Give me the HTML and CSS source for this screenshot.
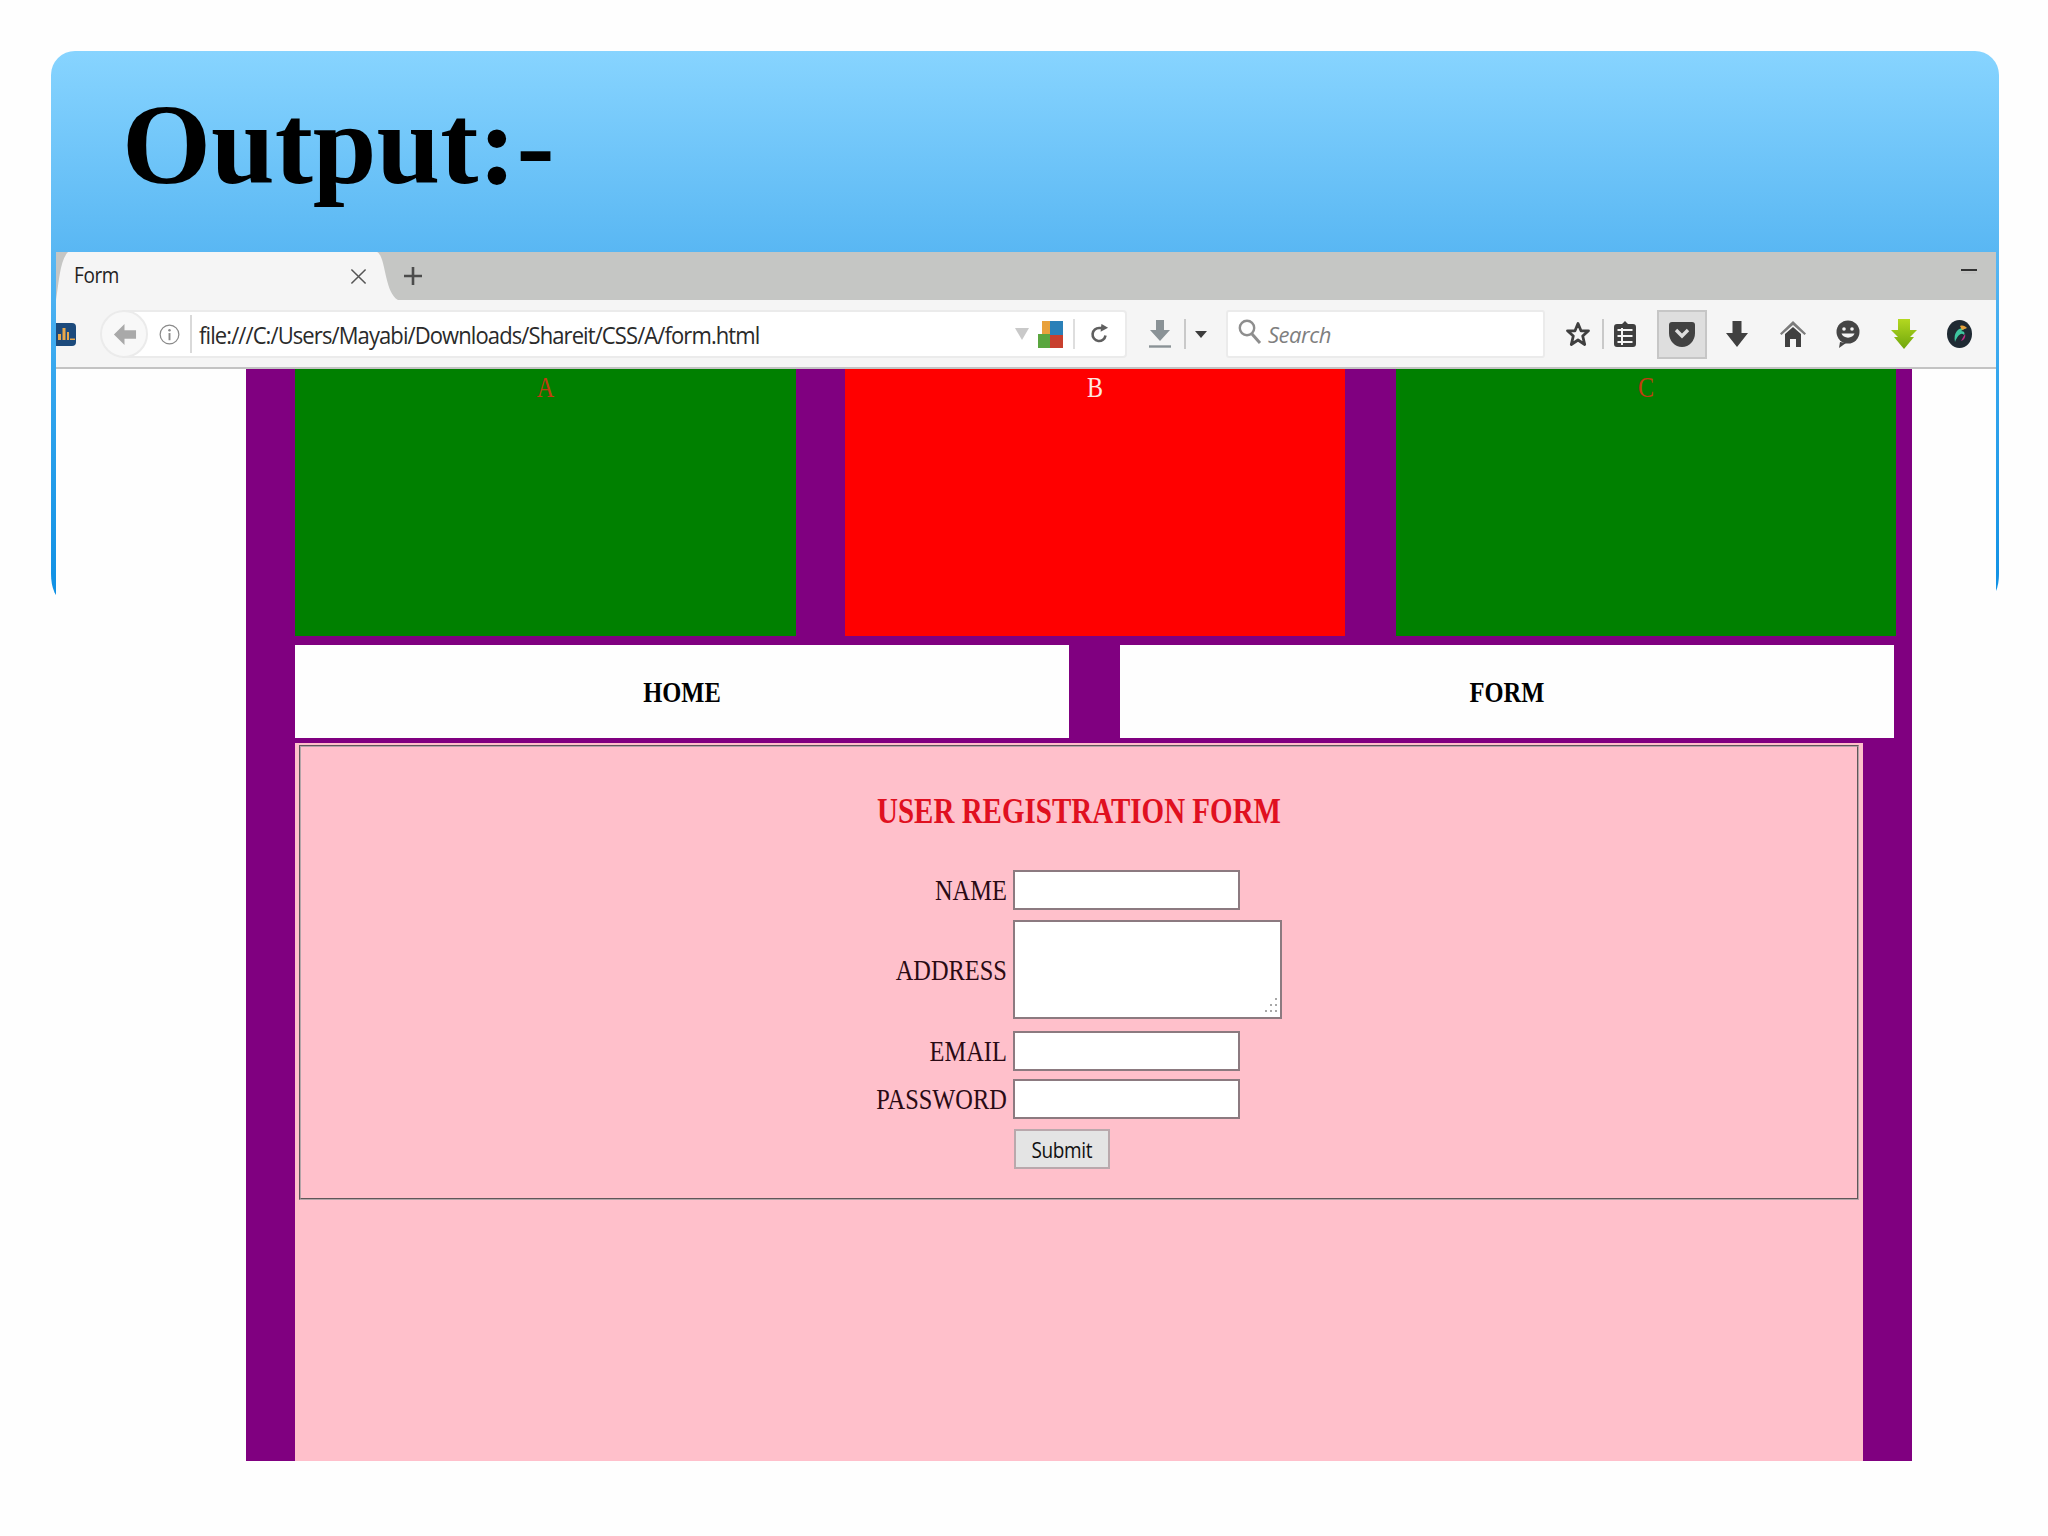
FILE: index.html
```html
<!DOCTYPE html>
<html lang="en">
<head>
<meta charset="utf-8">
<title>Output</title>
<link rel="stylesheet" href="styles.css">
</head>
<body>
<div class="slide-bg"></div>
<main class="slide">
  <h1 class="title">Output:-</h1>
  <section class="browser">
    <div class="tabstrip">
      <div class="tab">
        <span class="tab-label">Form</span>
        <svg class="tab-close" viewBox="0 0 18 18"><path d="M1.5 1.5 16.5 16.5M16.5 1.5 1.5 16.5" stroke="#555" stroke-width="1.6" fill="none"/></svg>
      </div>
      <svg class="tab-new" viewBox="0 0 20 20"><path d="M10 1V19M1 10H19" stroke="#4c4c4c" stroke-width="2.6" fill="none"/></svg>
      <svg class="win-min" viewBox="0 0 16 6"><path d="M0 2H16" stroke="#333" stroke-width="2"/><path d="M1 5H15" stroke="#bbb" stroke-width="1"/></svg>
    </div>
    <div class="toolbar">
      <svg class="ext-chart" viewBox="0 0 20 23"><rect x="-6" width="26" height="23" rx="4" fill="#1c4a7c"/><path d="M2 17H5V11H2ZM6.5 17H9.5V5H6.5ZM11 17H13V9H11ZM14 17H19V15.500H14Z" fill="#e8a84a"/></svg>
      <div class="back">
        <svg viewBox="0 0 26 26"><path d="M13 2 2 13 13 24V17.500H25V8.500H13Z" fill="#a9a9a9"/></svg>
      </div>
      <div class="urlbar">
        <svg class="info" viewBox="0 0 22 22"><circle cx="11" cy="11" r="9.800" fill="none" stroke="#8a8a8a" stroke-width="1.300"/><circle cx="11" cy="6.500" r="1.300" fill="#8a8a8a"/><path d="M11 9.500V17" stroke="#8a8a8a" stroke-width="2"/></svg>
        <span class="url-sep"></span>
        <span class="url-text">file:///C:/Users/Mayabi/Downloads/Shareit/CSS/A/form.html</span>
        <svg class="url-drop" viewBox="0 0 14 12"><path d="M0 0H14L7 12Z" fill="#c9c9c9"/></svg>
        <svg class="avg" viewBox="0 0 25 27"><rect x="4" y="0" width="8" height="13" fill="#e8a13c"/><rect x="0" y="13" width="12" height="14" fill="#5aa63f"/><rect x="12" y="0" width="13" height="14" fill="#2a80b8"/><rect x="12" y="14" width="13" height="13" fill="#c8402e"/></svg>
        <span class="url-sep2"></span>
        <svg class="reload" viewBox="0 0 20 20"><path d="M15.500 11.500A6.500 6.500 0 1 1 9.500 4H13" fill="none" stroke="#5f5f5f" stroke-width="2.600"/><path d="M11 0V8L18 3Z" fill="#5f5f5f" transform="rotate(6 12 4)"/></svg>
      </div>
      <svg class="dl" viewBox="0 0 22 28"><path d="M7 0H15V10H21L11 21 1 10H7Z" fill="#8a9296"/><path d="M0 26.500H22" stroke="#8a9296" stroke-width="2.400"/></svg>
      <span class="tool-sep"></span>
      <svg class="caret" viewBox="0 0 12 7"><path d="M0 0H12L6 7Z" fill="#3c3c3c"/></svg>
      <div class="search">
        <svg class="mag" viewBox="0 0 24 26"><circle cx="9" cy="9" r="7.200" fill="none" stroke="#8e8e8e" stroke-width="2.400"/><path d="M14 15 22 24" stroke="#8e8e8e" stroke-width="3"/></svg>
        <span class="search-text">Search</span>
      </div>
      <svg class="star" viewBox="0 0 26 26"><path d="M13 2.500 16 9.800H23.500L17.700 15 19.700 23.500 13 19 6.300 23.500 8.300 15 2.500 9.800H10Z" fill="none" stroke="#3f3f3f" stroke-width="2.800" stroke-linejoin="round"/></svg>
      <span class="tool-sep sep-star"></span>
      <svg class="clip" viewBox="0 0 22 26"><path d="M8 3 11 0 14 3H19Q22 3 22 6V23Q22 26 19 26H3Q0 26 0 23V6Q0 3 3 3Z" fill="#3f3f3f"/><path d="M3.500 9H18.500M3.500 15H18.500M3.500 21H18.500M8 7V24" stroke="#f5f5f5" stroke-width="2" fill="none"/></svg>
      <div class="pocket">
        <svg viewBox="0 0 26 25"><path d="M3 0H23Q26 0 26 3V11C26 19 20 25 13 25S0 19 0 11V3Q0 0 3 0Z" fill="#424242"/><path d="M7 8 13 14 19 8" fill="none" stroke="#dedede" stroke-width="3.400"/></svg>
      </div>
      <svg class="down" viewBox="0 0 22 26"><path d="M6.500 0H15.500V12H22L11 26 0 12H6.500Z" fill="#404040"/></svg>
      <svg class="home" viewBox="0 0 26 26"><path d="M13 0 26 12.500 24.500 14 13 4 1.500 14 0 12.500Z" fill="#7b7b7b"/><path d="M13 6 21 13V26H16V18H10V26H5V13Z" fill="#404040"/></svg>
      <svg class="smile" viewBox="0 0 24 28"><circle cx="12" cy="12" r="11.500" fill="#454545"/><path d="M4 22 3 28 10 23Z" fill="#454545"/><circle cx="8" cy="9" r="1.800" fill="#f5f5f5"/><circle cx="16" cy="9" r="1.800" fill="#f5f5f5"/><path d="M5.500 13.500C7 19 17 19 18.500 13.500Z" fill="#f5f5f5"/></svg>
      <svg class="leaf" viewBox="0 0 26 30"><defs><linearGradient id="lg" x1="0" y1="0" x2="0" y2="1"><stop offset="0" stop-color="#b4d820"/><stop offset="1" stop-color="#6fa60c"/></linearGradient></defs><path d="M7 0H19V11H26L19 18H23L13 30 3 18H7L0 11H7Z" fill="url(#lg)"/></svg>
      <svg class="orb" viewBox="0 0 25 28"><ellipse cx="12.500" cy="14" rx="12.500" ry="14" fill="#1f2a33"/><path d="M8 22C6 12 12 7 19 8L14 11C18 11 18 14 17 15 15 12 11 14 8 22Z" fill="#3fc6a0"/><path d="M13 6C16 5 18 6 20 8L15 10Z" fill="#e6a23c"/><path d="M18 14C19 17 17 20 14 21Z" fill="#c0308a"/></svg>
    </div>
    <div class="viewport">
      <div class="page">
        <div class="boxes">
          <div class="box box-a"><span class="tall">A</span></div>
          <div class="box box-b"><span class="tall">B</span></div>
          <div class="box box-c"><span class="tall">C</span></div>
        </div>
        <nav class="nav">
          <a class="nav-link nav-home"><span class="tall">HOME</span></a>
          <a class="nav-link nav-form"><span class="tall">FORM</span></a>
        </nav>
        <div class="panel">
          <fieldset class="fieldset">
            <h3 class="form-title"><span class="tall">USER REGISTRATION FORM</span></h3>
            <form class="form">
              <label class="label"><span class="tall">NAME</span></label>
              <div class="field"><input class="input" type="text"></div>
              <label class="label"><span class="tall">ADDRESS</span></label>
              <div class="field field-area">
                <textarea class="area"></textarea>
                <svg class="grip" viewBox="0 0 12 16"><g fill="#a8a8a8"><rect x="10" y="0" width="2" height="2"/><rect x="5" y="6" width="2" height="2"/><rect x="10" y="6" width="2" height="2"/><rect x="0" y="12" width="2" height="2"/><rect x="5" y="12" width="2" height="2"/><rect x="10" y="12" width="2" height="2"/></g></svg>
              </div>
              <label class="label"><span class="tall">EMAIL</span></label>
              <div class="field"><input class="input" type="text"></div>
              <label class="label"><span class="tall">PASSWORD</span></label>
              <div class="field"><input class="input" type="password"></div>
              <div class="field field-submit"><button class="submit" type="button"><span class="submit-text">Submit</span></button></div>
            </form>
          </fieldset>
        </div>
      </div>
    </div>
  </section>
</main>
</body>
</html>
```
FILE: styles.css
```css
* { box-sizing: border-box; }
html, body { margin: 0; padding: 0; }
body {
  background: #fefefe;
  width: 2048px;
  height: 1536px;
  overflow: hidden;
  position: relative;
  font-family: "Liberation Serif", "Times New Roman", serif;
}
.slide-bg {
  position: absolute;
  left: 51px;
  top: 51px;
  width: 1948px;
  height: 549px;
  border-radius: 24px 24px 12px 12px / 24px 24px 26px 26px;
  background: linear-gradient(180deg, #87d4ff 0, #59b7f3 201px, #36a7ee 320px, #0f90e4 549px);
}
.slide { position: relative; padding-top: 51px; }
.title {
  margin: 0;
  height: 201px;
  padding: 37px 0 0 122px;
  font: bold 114.5px/1 "Liberation Serif", serif;
  color: #000;
}
.browser { margin-left: 56px; width: 1940px; }
.tabstrip {
  height: 48px;
  background: #c5c6c4;
  display: flex;
  align-items: center;
  position: relative;
}
.tab {
  width: 342px;
  height: 48px;
  background: #f5f5f5;
  clip-path: path("M0 48C3 30 4 8 12 0L321 0C330 4 328 40 342 48Z");
  display: flex;
  align-items: center;
  padding-left: 18px;
}
.tab-label {
  font: 19px/1 "Open Sans", sans-serif;
  color: #222;
  display: inline-block;
  transform: translateY(-1px) scaleY(1.15);
  letter-spacing: -0.4px;
}
.tab-close { width: 17px; height: 17px; margin-left: auto; margin-right: 31px; }
.tab-new { width: 20px; height: 20px; margin-left: 5px; }
.win-min { width: 16px; height: 6px; margin-left: auto; margin-right: 19px; margin-top: -10px; }
.toolbar {
  height: 69px;
  background: #f5f5f5;
  border-bottom: 2px solid #c3c3c3;
  display: flex;
  align-items: center;
  position: relative;
  padding-top: 1px;
}
.ext-chart { width: 20px; height: 23px; margin-left: 0; }
.back {
  width: 48px;
  height: 48px;
  border-radius: 50%;
  background: #f8f8f8;
  border: 2px solid #ebebeb;
  margin-left: 24px;
  display: flex;
  align-items: center;
  justify-content: center;
  position: relative;
  z-index: 1;
  flex: none;
}
.back svg { width: 25px; height: 25px; }
.urlbar {
  width: 1005px;
  height: 48px;
  margin-left: -26px;
  background: #fff;
  border: 2px solid #ebebeb;
  border-radius: 0 4px 4px 0;
  display: flex;
  align-items: center;
  padding-left: 35px;
  flex: none;
}
.info { width: 21px; height: 21px; flex: none; }
.url-sep { width: 2px; height: 38px; background: #d9d9d9; margin-left: 10px; flex: none; }
.url-text {
  margin-left: 7px;
  width: 560px;
  flex: none;
  font: 22px/1 "Open Sans", sans-serif;
  color: #2a2a2a;
  white-space: nowrap;
  letter-spacing: -0.9px;
  display: inline-block;
  transform: translateY(1px) scaleY(1.05);
  transform-origin: left center;
}
.url-drop { width: 14px; height: 12px; margin-left: 256px; flex: none; }
.avg { width: 25px; height: 27px; margin-left: 9px; flex: none; }
.url-sep2 { width: 2px; height: 30px; background: #dedede; margin-left: 10px; flex: none; }
.reload { width: 20px; height: 20px; margin-left: 15px; flex: none; }
.dl { width: 22px; height: 28px; margin-left: 22px; flex: none; }
.tool-sep { width: 2px; height: 30px; background: #c9c9c9; margin-left: 13px; flex: none; }
.caret { width: 12px; height: 7px; margin-left: 9px; flex: none; }
.search {
  width: 319px;
  height: 48px;
  margin-left: 19px;
  background: #fff;
  border: 2px solid #ebebeb;
  border-radius: 3px;
  display: flex;
  align-items: center;
  padding-left: 10px;
  flex: none;
}
.mag { width: 24px; height: 26px; flex: none; margin-top: -4px; }
.search-text {
  margin-left: 6px;
  font: italic 22px/1 "Open Sans", sans-serif;
  color: #7f7f7f;
  letter-spacing: -0.5px;
}
.star { width: 26px; height: 26px; margin-left: 20px; flex: none; }
.sep-star { margin-left: 11px; }
.clip { width: 22px; height: 26px; margin-left: 10px; flex: none; }
.pocket {
  width: 50px;
  height: 49px;
  background: #dedede;
  border: 2px solid #c6c6c6;
  margin-left: 21px;
  display: flex;
  align-items: center;
  justify-content: center;
  flex: none;
}
.pocket svg { width: 26px; height: 25px; }
.down { width: 22px; height: 26px; margin-left: 19px; flex: none; }
.home { width: 26px; height: 26px; margin-left: 32px; flex: none; }
.smile { width: 24px; height: 28px; margin-left: 30px; flex: none; }
.leaf { width: 26px; height: 30px; margin-left: 31px; flex: none; }
.orb { width: 25px; height: 28px; margin-left: 30px; flex: none; }
.viewport { padding-left: 190px; background: #fefefe; }
.page {
  width: 1666px;
  height: 1092px;
  background: #800080;
  padding-left: 49px;
}
.tall { display: inline-block; transform: scaleY(1.22); }
.boxes { display: flex; height: 267px; }
.box {
  width: 500px;
  text-align: center;
  font-size: 24px;
  line-height: 1;
  padding-top: 6px;
}
.box-a, .box-c { background: #008000; color: #c03c10; }
.box-a { width: 501px; }
.box-b { background: #f00; color: #ffe8e0; margin: 0 51px 0 49px; }
.nav { display: flex; margin-top: 9px; height: 93px; }
.nav-link {
  background: #fefefe;
  display: flex;
  align-items: center;
  justify-content: center;
  font-weight: bold;
  font-size: 24.5px;
  color: #000;
}
.nav-home { width: 774px; }
.nav-form { width: 774px; margin-left: 51px; }
.panel {
  width: 1568px;
  height: 718px;
  margin-top: 5px;
  background: #ffc0cb;
  padding: 2px 4px 0;
}
.fieldset {
  margin: 0;
  padding: 0 0 28px;
  width: 1560px;
  height: 455px;
  border: 2px groove #b4a4a8;
}
.form-title {
  margin: 0;
  padding-top: 50px;
  height: 123px;
  text-align: center;
  font-size: 29px;
  line-height: 1;
  color: #e01020;
}
.form {
  display: grid;
  grid-template-columns: auto 269px;
  justify-content: center;
  column-gap: 6px;
  row-gap: 8px;
  align-items: center;
  color: #2a0a14;
}
.label { font-size: 24.4px; text-align: right; line-height: 1; }
.field { display: flex; position: relative; }
.input {
  width: 227px;
  height: 40px;
  margin: 0;
  background: #fff;
  border: 2px solid #8c7a80;
  padding: 0;
  display: block;
}
.field-area { margin: 2px 0 4px; }
.area {
  width: 269px;
  height: 99px;
  margin: 0;
  background: #fff;
  border: 2px solid #8c7a80;
  padding: 0;
  resize: none;
  display: block;
}
.grip { position: absolute; right: 5px; bottom: 5px; width: 12px; height: 16px; }
.field-submit { grid-column: 2; margin-top: 2px; padding-left: 1px; }
.submit {
  width: 96px;
  height: 40px;
  margin: 0;
  padding: 0;
  background: #e4e4e4;
  border: 2px solid #b9a8ac;
  color: #111;
}
.submit-text {
  display: inline-block;
  font: 19px/1 "Open Sans", sans-serif;
  letter-spacing: -0.4px;
  transform: translateY(1px) scaleY(1.15);
}
```
